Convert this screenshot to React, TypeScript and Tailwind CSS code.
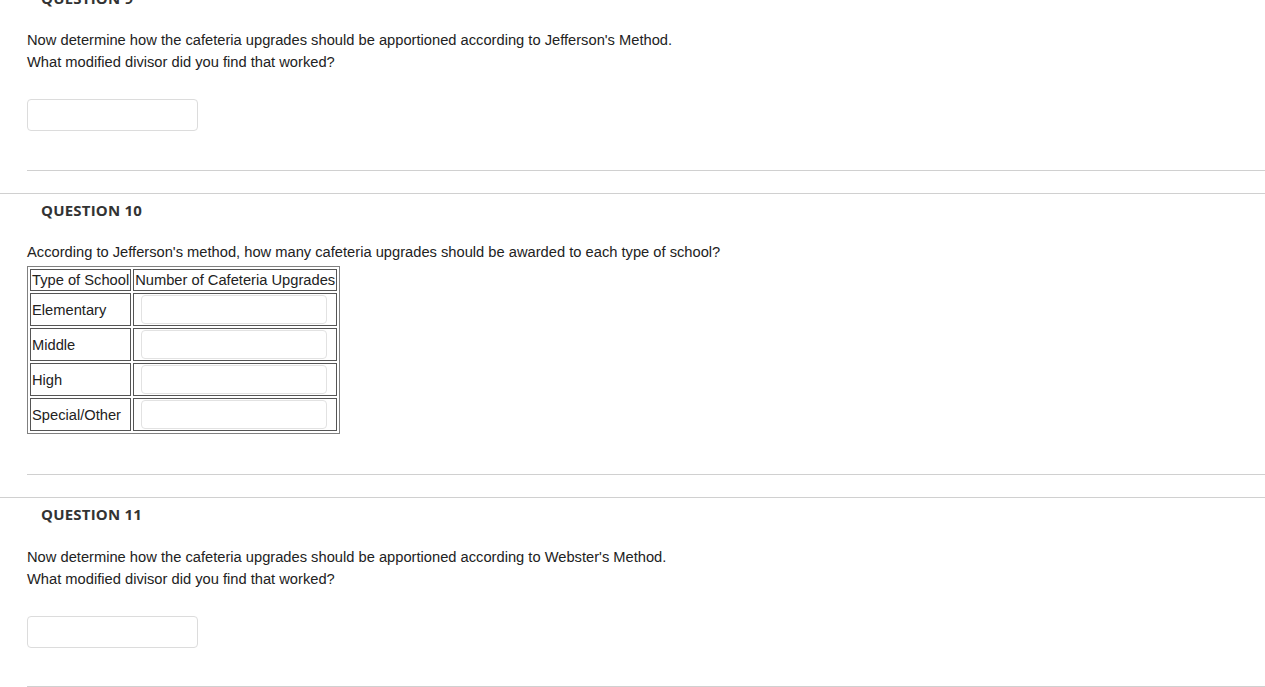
const rows = ["Elementary", "Middle", "High", "Special/Other"];

function Heading({ children }: { children: string }) {
  return (
    <h2 className="px-[41px] font-['Open_Sans',sans-serif] text-[15px] font-bold leading-[32px] tracking-[0.2px] text-[#333]">
      {children}
    </h2>
  );
}

function TextInput() {
  return (
    <input
      type="text"
      className="block h-[32px] w-[171px] rounded-[4px] border border-[#dcdcdc] bg-white"
    />
  );
}

export default function App() {
  return (
    <div className="min-h-screen overflow-hidden bg-white font-['Liberation_Sans',Arial,sans-serif] text-[14.7px] text-[#222]">
      {/* Question 9 */}
      <section className="-mt-[19px] border-t border-[#d0d0d0]">
        <Heading>QUESTION 9</Heading>
        <div className="pl-[27px] pt-[15px]">
          <p className="leading-[22px]">
            Now determine how the cafeteria upgrades should be apportioned according to Jefferson's Method.
            <br />
            What modified divisor did you find that worked?
          </p>
          <div className="pt-[26px]">
            <TextInput />
          </div>
          <div className="mt-[39px] border-t border-[#d0d0d0]" />
        </div>
      </section>

      {/* Question 10 */}
      <section className="mt-[22px] border-t border-[#d0d0d0]">
        <Heading>QUESTION 10</Heading>
        <div className="pl-[27px] pt-[15px]">
          <p className="leading-[22px]">
            According to Jefferson's method, how many cafeteria upgrades should be awarded to each type of school?
          </p>
          <table className="mt-[3px] border-separate border-spacing-[2px] border border-[#808080] leading-[20px]">
            <tbody>
              <tr>
                <td className="border border-[#555] px-[1px]">Type of School</td>
                <td className="border border-[#555] px-[1px]">Number of Cafeteria Upgrades</td>
              </tr>
              {rows.map((r) => (
                <tr key={r}>
                  <td className="border border-[#555] px-[1px]">{r}</td>
                  <td className="border border-[#555] py-[1px]">
                    <input
                      type="text"
                      className="mx-[7px] block h-[29px] w-[186px] rounded-[4px] border border-[#e2e2e2] bg-white"
                    />
                  </td>
                </tr>
              ))}
            </tbody>
          </table>
          <div className="mt-[40px] border-t border-[#d0d0d0]" />
        </div>
      </section>

      {/* Question 11 */}
      <section className="mt-[22px] border-t border-[#d0d0d0]">
        <Heading>QUESTION 11</Heading>
        <div className="pl-[27px] pt-[16px]">
          <p className="leading-[22px]">
            Now determine how the cafeteria upgrades should be apportioned according to Webster's Method.
            <br />
            What modified divisor did you find that worked?
          </p>
          <div className="pt-[26px]">
            <TextInput />
          </div>
          <div className="mt-[38px] border-t border-[#d0d0d0]" />
        </div>
      </section>
    </div>
  );
}
